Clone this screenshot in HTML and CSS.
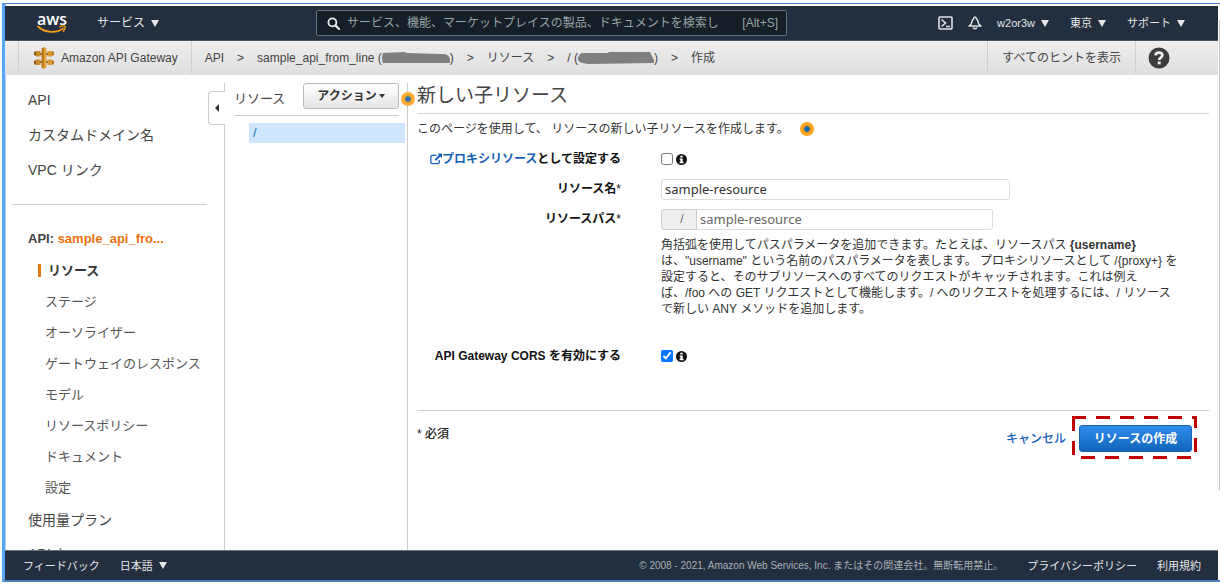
FILE: index.html
```html
<!DOCTYPE html>
<html lang="ja">
<head>
<meta charset="utf-8">
<meta name="viewport" content="width=device-width, initial-scale=1">
<title>Amazon API Gateway</title>
<link rel="stylesheet" href="styles.css">
</head>
<body>
<div class="app">
  <header class="topnav">
    <a class="logo" href="#" aria-label="aws">
      <span class="logo-text">aws</span>
      <svg class="logo-smile" viewBox="0 0 30 9" width="30" height="9" aria-hidden="true">
        <path d="M1 1.500C8 8 19 8.500 26 3.500" fill="none" stroke="#f79a1c" stroke-width="1.800" stroke-linecap="round"/>
        <path d="M22.500 1.800C25 .8 27.500 .8 28 1.500C28.500 2.500 27.500 5 26.300 6.300" fill="none" stroke="#f79a1c" stroke-width="1.400" stroke-linecap="round"/>
      </svg>
    </a>
    <button class="nav-btn nav-services" type="button">サービス<span class="caret"></span></button>
    <div class="search">
      <svg viewBox="0 0 14 14" width="13" height="13" aria-hidden="true"><circle cx="5.800" cy="5.800" r="4.300" fill="none" stroke="#e8eaec" stroke-width="2"/><path d="M9 9l4 4" stroke="#e8eaec" stroke-width="2.400" stroke-linecap="round"/></svg>
      <input type="text" aria-label="検索" placeholder="サービス、機能、マーケットプレイスの製品、ドキュメントを検索し">
      <span class="shortcut">[Alt+S]</span>
    </div>
    <div class="nav-right">
      <button class="icon-btn" type="button" aria-label="CloudShell">
        <svg viewBox="0 0 15 14" width="15" height="14"><rect x="1" y="1" width="13" height="12" rx="1" fill="none" stroke="#dfe3e6" stroke-width="1.600"/><path d="M3.500 3.500L7.500 7L3.500 10.500M8 10.500h4" fill="none" stroke="#dfe3e6" stroke-width="1.600"/></svg>
      </button>
      <button class="icon-btn" type="button" aria-label="通知">
        <svg viewBox="0 0 14 14" width="14" height="14"><path d="M7 1C8 1 8.300 2 8.500 3C10.300 3.800 10 6.500 10.800 8L13 10H1L3.200 8C4 6.500 3.700 3.800 5.500 3C5.700 2 6 1 7 1Z" fill="none" stroke="#dfe3e6" stroke-width="1.500" stroke-linejoin="round"/><path d="M5.200 11.300C5.500 13.200 8.500 13.200 8.800 11.300" fill="none" stroke="#dfe3e6" stroke-width="1.500"/></svg>
      </button>
      <button class="nav-btn small" type="button">w2or3w<span class="caret"></span></button>
      <button class="nav-btn small nav-region" type="button">東京<span class="caret"></span></button>
      <button class="nav-btn small nav-region" type="button">サポート<span class="caret"></span></button>
    </div>
  </header>

  <div class="crumbbar">
    <a class="service" href="#">
      <svg viewBox="0 0 20 22" width="20" height="22" aria-hidden="true">
        <path d="M0 5l2-1v5l-2-1zM0 14l2-1v5l-2-1z" fill="#8f5f17"/>
        <path d="M2 4h4.500v5.500H2zM2 12.500h4.500V18H2z" fill="#c98c2a"/>
        <path d="M13.500 4H18v5.500h-4.500zM13.500 12.500H18V18h-4.500z" fill="#d99a35"/>
        <path d="M18 4l2 1v3l-2 1zM18 13l2 1v3l-2 1z" fill="#b97d1f"/>
        <path d="M6 6h8v2H6zM6 14h8v2H6z" fill="#9c6a1c"/>
        <path d="M7.500 1.500L10 0V22L7.500 20.500Z" fill="#b97d1f"/><path d="M12.500 1.500L10 0V22L12.500 20.500Z" fill="#e0a33a"/>
      </svg>
      Amazon API Gateway
    </a>
    <nav class="crumbs" aria-label="パンくず">
      <a href="#">API</a><span class="sep">&gt;</span>
      <a href="#">sample_api_from_line (<svg viewBox="0 0 68 12" width="68" height="12"><path d="M1 1L23 0L24 1L60 2Q67 2 68 7V11H1Q-1 6 1 1Z" fill="#7f7f7f"/></svg>)</a><span class="sep">&gt;</span>
      <a href="#">リソース</a><span class="sep">&gt;</span>
      <a href="#">/ (<svg viewBox="0 0 76 12" width="76" height="12"><path d="M4 1L30 1L31 0H72L76 8V11L10 12Q-1 11 0 6Q1 2 4 1Z" fill="#7f7f7f"/></svg>)</a><span class="sep">&gt;</span>
      <span>作成</span>
    </nav>
    <a class="hints" href="#">すべてのヒントを表示</a>
    <button class="help" type="button" aria-label="ヘルプ">
      <svg viewBox="0 0 22 22" width="22" height="22"><circle cx="11" cy="11" r="10.500" fill="#3d3d3d"/><path d="M7.500 8.300C7.800 4.700 14.300 4.700 14.300 8.300C14.300 10.800 11.200 10.500 11.200 13" fill="none" stroke="#eee" stroke-width="2.700"/><rect x="9.700" y="14.500" width="3" height="2.800" fill="#eee"/></svg>
    </button>
  </div>

  <div class="workspace">
    <aside class="sidebar">
      <ul class="menu">
        <li><a href="#">API</a></li>
        <li><a href="#">カスタムドメイン名</a></li>
        <li><a href="#">VPC リンク</a></li>
      </ul>
      <hr>
      <p class="api-name">API: <a href="#">sample_api_fro...</a></p>
      <ul class="submenu">
        <li class="current"><a href="#">リソース</a></li>
        <li><a href="#">ステージ</a></li>
        <li><a href="#">オーソライザー</a></li>
        <li><a href="#">ゲートウェイのレスポンス</a></li>
        <li><a href="#">モデル</a></li>
        <li><a href="#">リソースポリシー</a></li>
        <li><a href="#">ドキュメント</a></li>
        <li><a href="#">設定</a></li>
      </ul>
      <ul class="menu">
        <li><a href="#">使用量プラン</a></li>
        <li><a href="#">API キー</a></li>
      </ul>
      <button class="collapse" type="button" aria-label="メニューを閉じる"><span></span></button>
    </aside>

    <section class="tree">
      <div class="tree-head">
        <h2>リソース</h2>
        <button class="action" type="button">アクション<span></span></button>
      </div>
      <a class="tree-row" href="#">/</a>
      <span class="dot dot-edge"></span>
    </section>

    <main class="main">
      <h1>新しい子リソース</h1>
      <p class="intro">このページを使用して、 リソースの新しい子リソースを作成します。<span class="dot"></span></p>
      <form class="form">
        <div class="row">
          <label class="label" for="proxy"><a href="#"><svg viewBox="0 0 13 12" width="12" height="12" aria-hidden="true"><path d="M7 2H2.500Q1 2 1 3.500V9.500Q1 11 2.500 11H8.500Q10 11 10 9.500V7" fill="none" stroke="currentColor" stroke-width="1.400"/><path d="M8 0H13V5L11.200 3.300L6.500 8L5 6.500L9.700 1.800Z" fill="currentColor"/></svg>プロキシリソース</a>として設定する</label>
          <div class="check"><input type="checkbox" id="proxy"><svg viewBox="0 0 12 12" width="11" height="11" aria-hidden="true"><circle cx="6" cy="6" r="6" fill="#111"/><path d="M4.700 1.800h2.600v2H4.700zM4 4.800h3.300v3.700H8.200V10H3.900V8.500H4.800V6.200H4z" fill="#fff"/></svg></div>
        </div>
        <div class="row">
          <label class="label" for="name">リソース名<span class="star">*</span></label>
          <input class="text name" id="name" type="text" value="sample-resource">
        </div>
        <div class="row">
          <label class="label" for="path">リソースパス<span class="star">*</span></label>
          <div class="group"><span class="addon">/</span><input class="text" id="path" type="text" value="sample-resource"></div>
        </div>
        <p class="note">角括弧を使用してパスパラメータを追加できます。たとえば、リソースパス <b>{username}</b><br>は、"username" という名前のパスパラメータを表します。 プロキシリソースとして /{proxy+} を<br>設定すると、そのサブリソースへのすべてのリクエストがキャッチされます。これは例え<br>ば、/foo への GET リクエストとして機能します。/ へのリクエストを処理するには、/ リソース<br>で新しい ANY メソッドを追加します。</p>
        <div class="row cors">
          <label class="label" for="cors">API Gateway CORS を有効にする</label>
          <div class="check"><input type="checkbox" id="cors" checked><svg viewBox="0 0 12 12" width="11" height="11" aria-hidden="true"><circle cx="6" cy="6" r="6" fill="#111"/><path d="M4.700 1.800h2.600v2H4.700zM4 4.800h3.300v3.700H8.200V10H3.900V8.500H4.800V6.200H4z" fill="#fff"/></svg></div>
        </div>
        <div class="actions">
          <span class="required">* 必須</span>
          <a class="cancel" href="#">キャンセル</a>
          <div class="submit-wrap">
            <button class="submit" type="button">リソースの作成</button>
            <svg class="marker" viewBox="0 0 125 43" aria-hidden="true"><path d="M0 1.500H123.500V41.500H1.500V1.500" fill="none" stroke="#c00000" stroke-width="3" stroke-dasharray="14 10"/></svg>
          </div>
        </div>
      </form>
    </main>
  </div>

  <footer class="footer">
    <a href="#">フィードバック</a>
    <button class="nav-btn small" type="button">日本語<span class="caret"></span></button>
    <span class="copyright">© 2008 - 2021, Amazon Web Services, Inc. またはその関連会社。無断転用禁止。</span>
    <a href="#">プライバシーポリシー</a>
    <a href="#">利用規約</a>
  </footer>
  <div class="scrollbar"></div>
</div>
</body>
</html>
```

FILE: styles.css
```css
* { box-sizing: border-box; }

body {
  margin: 0;
  height: 100vh;
  padding: 3px 0 5px 2px;
  background: #fff;
  color: #444;
  font: 13px/16px "Liberation Sans", "Noto Sans CJK JP", sans-serif;
}

a { color: inherit; text-decoration: none; }
ul, p, h1, h2 { margin: 0; padding: 0; font-weight: 400; }
ul { list-style: none; }
button, input { font: inherit; color: inherit; margin: 0; }
button { padding: 0; border: 0; background: none; cursor: pointer; white-space: nowrap; }
svg { flex: none; }

.app {
  position: relative;
  display: flex;
  flex-direction: column;
  height: 100%;
  padding: 2px 2px 0 0;
  border-top: 1px solid #4f83c9;
  border-bottom: 2px solid #4a7fbe;
  border-left: 3px solid #58a6f8;
  box-shadow: inset 1px 0 #b5cfea;
  overflow: hidden;
}

.scrollbar {
  position: absolute;
  top: 16px;
  bottom: 90px;
  right: 0;
  width: 1px;
  background: #c4c4c4;
}

/* Top navigation */
.topnav {
  display: flex;
  align-items: center;
  flex: none;
  height: 35px;
  padding: 0 33px 0 32px;
  background: #232f3e;
  border-bottom: 1px solid #4a5562;
  color: #e4e7ea;
}
.logo { display: flex; flex-direction: column; width: 30px; color: #fff; }
.logo-text { font: 600 16px/14px "Open Sans", sans-serif; }
.logo-smile { margin-top: -1px; }
.nav-btn { display: flex; align-items: center; gap: 6px; font-size: 12px; }
.small { font-size: 11px; }
.caret { border: 4px solid transparent; border-top: 7px solid #e4e7ea; border-bottom: 0; }
.nav-services { margin-left: 30px; }
.search {
  display: flex;
  align-items: center;
  flex: 0 1 471px;
  min-width: 0;
  height: 26px;
  margin-left: 157px;
  padding: 0 8px 0 10px;
  border: 1px solid #687078;
  border-radius: 2px;
  background: #161e28;
}
.search input {
  flex: 1;
  min-width: 0;
  margin-left: 7px;
  padding: 0;
  border: 0;
  outline: 0;
  background: none;
  font-size: 12px;
}
.search input::placeholder { color: #95a5a6; opacity: 1; }
.shortcut { font-size: 12px; color: #95a5a6; }
.nav-right { display: flex; align-items: center; margin-left: auto; }
.icon-btn { display: flex; margin-right: 15px; }
.nav-region { margin-left: 21px; }

/* Service bar */
.crumbbar {
  display: flex;
  flex: none;
  height: 34px;
  padding-left: 13px;
  border-bottom: 1px solid #e2e2e2;
  background: linear-gradient(#eee, #dfdfdf);
  font-size: 12px;
  white-space: nowrap;
}
.service {
  display: flex;
  align-items: center;
  gap: 7px;
  padding: 0 13px 0 15px;
  border: solid #cfcfcf;
  border-width: 0 1px;
}
.crumbs { display: flex; align-items: center; gap: 13px; padding-left: 13px; }
.crumbs a { display: flex; align-items: center; white-space: pre; }
.hints {
  display: flex;
  align-items: center;
  margin-left: auto;
  padding: 0 14px;
  border: solid #cfcfcf;
  border-width: 0 1px;
}
.help { display: flex; align-items: center; padding: 0 48px 0 12px; }

/* Columns */
.workspace { display: flex; flex: 1; min-height: 0; padding-top: 8px; overflow: hidden; }

.sidebar {
  position: relative;
  flex: none;
  width: 220px;
  padding: 0 17px 0 7px;
  border-right: 1px solid #ccc;
}
.menu { padding-left: 16px; font-size: 14px; line-height: 35px; }
.submenu + .menu { line-height: 34px; }
.sidebar hr { margin: 16px 0 0; border: 0; border-top: 1px solid #ccc; }
.api-name { padding: 25px 0 7px 16px; font-weight: 700; font-size: 13px; line-height: 18px; }
.api-name a { color: #ec7211; }
.submenu { line-height: 31px; }
.submenu li { padding-left: 33px; color: #555; }
.submenu .current {
  padding-left: 36px;
  color: #333;
  font-weight: 700;
  background: linear-gradient(#e47911, #e47911) 26px center / 3px 13px no-repeat;
}
.collapse {
  position: absolute;
  top: 8px;
  right: -1px;
  display: flex;
  align-items: center;
  width: 17px;
  height: 34px;
  padding-left: 6px;
  border: 1px solid #ccc;
  border-right: 0;
  border-radius: 4px 0 0 4px;
  background: #fff;
}
.collapse span { border: 4px solid transparent; border-right-color: #333; border-left: 0; }

.tree {
  position: relative;
  flex: none;
  width: 183px;
  padding: 0 2px 0 9px;
  border-right: 1px solid #ccc;
}
.tree-head {
  display: flex;
  align-items: flex-start;
  justify-content: space-between;
  margin-right: 6px;
  border-bottom: 1px solid #ccc;
}
.tree-head h2 { font-size: 13px; line-height: 32px; }
.action {
  display: flex;
  align-items: center;
  justify-content: center;
  gap: 2px;
  width: 96px;
  height: 26px;
  border: 1px solid #bbb;
  border-radius: 3px;
  background: linear-gradient(#fff, #e4e4e4);
  color: #333;
  font-weight: 700;
  font-size: 12px;
}
.action span { border: 3px solid transparent; border-top: 4px solid #333; border-bottom: 0; }
.tree-row {
  display: block;
  margin: 7px 0 0 15px;
  padding-left: 4px;
  background: #cfe6ff;
  color: #146eb4;
  line-height: 20px;
}
.dot {
  display: inline-block;
  width: 14px;
  height: 14px;
  border-radius: 50%;
  background: radial-gradient(circle, #1166bb 2px, #a58438 3px, #ffa51e 4px);
}
.dot-edge { position: absolute; top: 9px; right: -8px; z-index: 1; opacity: .9; }

.main { flex: 1; min-width: 0; padding: 0 9px; color: #333; }
.main h1 { padding-bottom: 5px; border-bottom: 1px solid #d5d5d5; font-size: 19px; line-height: 25px; color: #444; }
.intro { display: flex; align-items: center; gap: 11px; margin-top: 6px; font-size: 12px; line-height: 18px; }

/* Form */
.form { padding-top: 11px; font-size: 12px; }
.row { display: flex; align-items: center; gap: 40px; height: 20px; margin-bottom: 10px; }
.label {
  display: flex;
  align-items: center;
  justify-content: flex-end;
  flex: none;
  width: 204px;
  color: #111;
  font-weight: 700;
  white-space: pre;
}
.label a { display: flex; align-items: center; color: #1360b8; }
.star { font-weight: 400; }
.check { display: flex; align-items: center; gap: 3px; }
.check input { width: 12px; height: 12px; accent-color: #0075ff; }
.text {
  min-width: 0;
  height: 21px;
  padding: 0 3px;
  border: 1px solid #ddd;
  border-radius: 3px;
  background: #fff;
  font: 13px/18px "Noto Sans", sans-serif;
}
.name { flex: 0 1 349px; }
.group { display: flex; flex: 0 1 332px; min-width: 0; color: #666; }
.group .text { flex: 1; border-left: 0; border-radius: 0 3px 3px 0; }
.addon {
  width: 36px;
  padding-left: 6px;
  border: 1px solid #ccc;
  border-radius: 3px 0 0 3px;
  background: #eee;
  text-align: center;
  line-height: 19px;
}
.note { margin: -2px 0 0 244px; font-size: 12px; line-height: 16px; }
.cors { margin: 29px 0 44px; }
.actions {
  display: flex;
  align-items: center;
  gap: 13px;
  padding: 14px 17px 0 0;
  border-top: 1px solid #ccc;
}
.required { margin: 0 auto 10px 0; color: #222; font-weight: 500; }
.cancel { color: #1360b8; font-weight: 500; }
.submit-wrap { position: relative; }
.submit {
  display: block;
  width: 113px;
  height: 27px;
  border: 1px solid #1763b5;
  border-radius: 3px;
  background: linear-gradient(#2e8ceb, #1166bb);
  color: #fff;
  font-weight: 700;
  font-size: 12px;
}
.marker { position: absolute; top: -9px; left: -7px; width: 125px; height: 43px; pointer-events: none; }

.footer {
  display: flex;
  align-items: center;
  gap: 20px;
  flex: none;
  height: 30px;
  padding: 0 17px 0 18px;
  border-top: 1px solid #6a737d;
  background: #232f3e;
  color: #e4e7ea;
  font-size: 11px;
  white-space: nowrap;
}
.copyright { margin: 0 4px 0 auto; color: #a9b1b8; font-size: 10px; }
```
